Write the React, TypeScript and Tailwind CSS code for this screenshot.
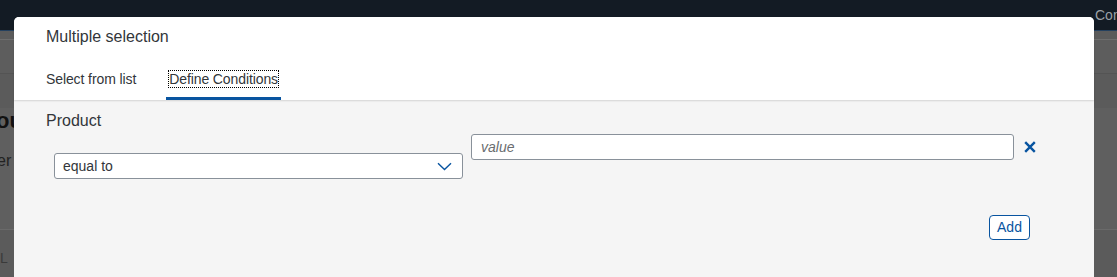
import React from "react";

const font = { fontFamily: '"Liberation Sans", Arial, sans-serif' };

export default function App() {
  return (
    <div className="relative w-[1117px] h-[277px] overflow-hidden bg-[#5b5b5b]" style={font}>
      {/* Page behind the dialog */}
      <div className="flex h-[31px] items-center justify-end bg-[#131b24] border-b border-[#24405e]">
        <span className="w-[22px] overflow-hidden whitespace-nowrap text-[14px] text-[#9aa0a7]">Contact</span>
      </div>
      <div className="h-[9px] border-b border-[#6e6e6e]" />
      <div className="h-[34px] border-b border-[#545454] bg-[#5d5d5d]" />
      <div className="h-[122px] border-b border-[#6a6a6a] bg-[#5f5f5f]">
        <div className="-ml-[4px] mt-[34px] text-[22px] font-bold leading-[26px] text-[#111]">ou</div>
        <div className="-ml-[3px] mt-[17px] text-[16px] leading-[20px] text-[#222]">er</div>
      </div>
      <div className="pt-[18px] text-[14px] text-[#3a3a3a]">L</div>

      {/* Dialog */}
      <div className="absolute left-[14px] top-[17px] bottom-0 w-[1080px] rounded-t-[5px] bg-[#f5f5f5] flex flex-col">
        <header className="relative z-10 h-[83px] rounded-t-[5px] bg-white shadow-[0_1px_2px_rgba(0,0,0,0.14)] flex flex-col justify-between">
          <h1 className="pl-[32px] pt-[10px] text-[16px] leading-[20px] text-[#32363a]">Multiple selection</h1>
          <div className="ml-[29px] flex gap-[27px] text-[14px] tracking-[-0.1px] text-[#32363a]">
            <div className="px-[3px] pt-[1px] pb-[10px] border-b-[3px] border-transparent">
              <span className="block leading-[16px]">Select from list</span>
            </div>
            <div className="px-[3px] pt-[1px] pb-[10px] border-b-[3px] border-[#0854a0]">
              <span className="block leading-[16px] outline outline-dotted outline-black">Define Conditions</span>
            </div>
          </div>
        </header>

        <main className="pl-[32px] pt-[11px]">
          <div className="text-[16px] leading-[20px] text-[#32363a]">Product</div>
          <div className="mt-[3px] flex items-start">
            <div className="ml-[8px] mt-[19px] flex h-[26px] w-[409px] items-center justify-between rounded-[3px] border border-[#89919a] bg-white pl-[8px] pr-[10px]">
              <span className="text-[14px] text-[#32363a]">equal to</span>
              <svg width="15" height="9" viewBox="0 0 15 9" fill="none">
                <path d="M1 1.2 L7.5 7.5 L14 1.2" stroke="#0854a0" strokeWidth="1.4" />
              </svg>
            </div>
            <div className="ml-[8px] flex h-[26px] w-[543px] items-center rounded-[3px] border border-[#89919a] bg-white pl-[9px]">
              <span className="text-[14px] italic text-[#6a6d70]">value</span>
            </div>
            <svg className="ml-[10px] mt-[7px]" width="12" height="12" viewBox="0 0 12 12" fill="none">
              <path d="M1.2 1.2 L10.8 10.8 M10.8 1.2 L1.2 10.8" stroke="#0854a0" strokeWidth="2.4" />
            </svg>
          </div>
          <div className="mt-[36px] flex justify-end pr-[64px]">
            <button className="h-[25px] w-[41px] rounded-[4px] border border-[#0854a0] bg-white text-[14px] text-[#0854a0]">
              Add
            </button>
          </div>
        </main>
      </div>
    </div>
  );
}
